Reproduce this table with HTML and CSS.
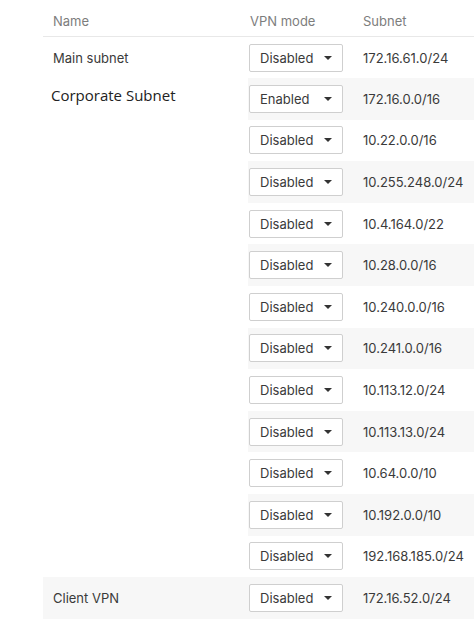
FILE: index.html
```html
<!DOCTYPE html>
<html>
<head>
<meta charset="utf-8">
<link rel="stylesheet" href="styles.css">
</head>
<body>
<table class="subnets">
  <colgroup>
    <col class="c-name">
    <col class="c-mode">
    <col class="c-subnet">
  </colgroup>
  <thead>
    <tr><th>Name</th><th class="mode">VPN mode</th><th>Subnet</th></tr>
  </thead>
  <tbody>
    <tr><td class="name">Main subnet</td><td class="mode"><div class="dd"><span>Disabled</span><svg width="8" height="4" viewBox="0 0 8 4"><path d="M0 0H8L4 4Z"/></svg></div></td><td class="net">172.16.61.0/24</td></tr>
    <tr class="odd"><td class="group" rowspan="12">Corporate Subnet</td><td class="mode"><div class="dd"><span>Enabled</span><svg width="8" height="4" viewBox="0 0 8 4"><path d="M0 0H8L4 4Z"/></svg></div></td><td class="net">172.16.0.0/16</td></tr>
    <tr><td class="mode"><div class="dd"><span>Disabled</span><svg width="8" height="4" viewBox="0 0 8 4"><path d="M0 0H8L4 4Z"/></svg></div></td><td class="net">10.22.0.0/16</td></tr>
    <tr class="odd"><td class="mode"><div class="dd"><span>Disabled</span><svg width="8" height="4" viewBox="0 0 8 4"><path d="M0 0H8L4 4Z"/></svg></div></td><td class="net">10.255.248.0/24</td></tr>
    <tr><td class="mode"><div class="dd"><span>Disabled</span><svg width="8" height="4" viewBox="0 0 8 4"><path d="M0 0H8L4 4Z"/></svg></div></td><td class="net">10.4.164.0/22</td></tr>
    <tr class="odd"><td class="mode"><div class="dd"><span>Disabled</span><svg width="8" height="4" viewBox="0 0 8 4"><path d="M0 0H8L4 4Z"/></svg></div></td><td class="net">10.28.0.0/16</td></tr>
    <tr><td class="mode"><div class="dd"><span>Disabled</span><svg width="8" height="4" viewBox="0 0 8 4"><path d="M0 0H8L4 4Z"/></svg></div></td><td class="net">10.240.0.0/16</td></tr>
    <tr class="odd"><td class="mode"><div class="dd"><span>Disabled</span><svg width="8" height="4" viewBox="0 0 8 4"><path d="M0 0H8L4 4Z"/></svg></div></td><td class="net">10.241.0.0/16</td></tr>
    <tr><td class="mode"><div class="dd"><span>Disabled</span><svg width="8" height="4" viewBox="0 0 8 4"><path d="M0 0H8L4 4Z"/></svg></div></td><td class="net">10.113.12.0/24</td></tr>
    <tr class="odd"><td class="mode"><div class="dd"><span>Disabled</span><svg width="8" height="4" viewBox="0 0 8 4"><path d="M0 0H8L4 4Z"/></svg></div></td><td class="net">10.113.13.0/24</td></tr>
    <tr><td class="mode"><div class="dd"><span>Disabled</span><svg width="8" height="4" viewBox="0 0 8 4"><path d="M0 0H8L4 4Z"/></svg></div></td><td class="net">10.64.0.0/10</td></tr>
    <tr class="odd"><td class="mode"><div class="dd"><span>Disabled</span><svg width="8" height="4" viewBox="0 0 8 4"><path d="M0 0H8L4 4Z"/></svg></div></td><td class="net">10.192.0.0/10</td></tr>
    <tr><td class="mode"><div class="dd"><span>Disabled</span><svg width="8" height="4" viewBox="0 0 8 4"><path d="M0 0H8L4 4Z"/></svg></div></td><td class="net">192.168.185.0/24</td></tr>
    <tr class="odd"><td class="name">Client VPN</td><td class="mode"><div class="dd"><span>Disabled</span><svg width="8" height="4" viewBox="0 0 8 4"><path d="M0 0H8L4 4Z"/></svg></div></td><td class="net">172.16.52.0/24</td></tr>
  </tbody>
</table>
</body>
</html>
```

FILE: styles.css
```css
html, body {
  margin: 0;
  padding: 0;
  background: #fff;
}
body {
  padding-left: 43px;
  font-family: Inter, "Liberation Sans", sans-serif;
  font-size: 13px;
  color: #3a3a3a;
}
.subnets {
  border-collapse: collapse;
  table-layout: fixed;
  width: 431px;
}
.c-name { width: 205px; }
.c-mode { width: 105px; }
.subnets th {
  text-align: left;
  font-weight: 400;
  color: #7d7d7d;
  padding: 13px 10px 6px;
  line-height: 17px;
  height: 17px;
  border-bottom: 1px solid #e8e8e8;
  white-space: nowrap;
}
.subnets th.mode { padding-left: 2px; }
.subnets tbody tr { height: 41.6px; }
.subnets tbody tr.odd td { background: #f7f7f7; }
.subnets tbody tr.odd td.group { background: #fff; }
.subnets td {
  padding: 0 10px;
  vertical-align: middle;
  white-space: nowrap;
}
.subnets td.mode { padding: 0 0 0 1px; }
.subnets td.group {
  vertical-align: top;
  padding: 6px 8px;
  font-family: "Open Sans", "Noto Sans", sans-serif;
  font-size: 15px;
  color: #222;
  line-height: 22px;
}
.dd {
  box-sizing: border-box;
  width: 94px;
  height: 28px;
  border: 1px solid #cfcfcf;
  border-radius: 2px;
  background: #fff;
  display: flex;
  align-items: center;
  justify-content: space-between;
  padding: 0 10px 0 10px;
  color: #3a3a3a;
}
.dd svg { fill: #333; }
```
